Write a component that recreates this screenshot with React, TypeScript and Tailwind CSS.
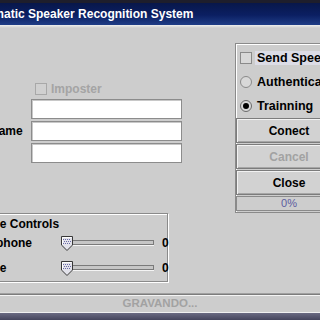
import React from "react";

function Thumb() {
  const dots: React.ReactElement[] = [];
  for (let y = 3; y <= 7; y += 2) {
    for (let x = 2 + ((y - 3) / 2) % 2; x <= 9; x += 2) {
      dots.push(<rect key={`${x}-${y}`} x={x} y={y} width={1} height={1} fill="#6c6ca8" />);
    }
  }
  return (
    <svg width="12" height="15" viewBox="0 0 12 15" className="block">
      <polygon points="0.5,0.5 11.5,0.5 11.5,9 6,14.5 0.5,9" fill="#e2e2ea" stroke="#383838" strokeWidth="1" />
      <polyline points="1.5,8.5 1.5,1.5 10.5,1.5" fill="none" stroke="#ffffff" strokeWidth="1" />
      {dots}
    </svg>
  );
}

function Slider() {
  return (
    <div className="relative w-[93px] h-[20px] shrink-0">
      <div className="absolute left-0 right-0 top-[7px] h-[5px] border border-[#7a7a7a] bg-[#c6c6c6] shadow-[0_1px_0_#f4f4f4]" />
      <div className="absolute left-0 top-[3px]">
        <Thumb />
      </div>
    </div>
  );
}

function Field({ label }: { label: string }) {
  return (
    <div className="flex items-center h-[20px]">
      <span className="w-[68px] shrink-0 whitespace-nowrap leading-[14px] ml-[-3px] mr-[3px]">{label}</span>
      <div className="w-[151px] h-[20px] border border-[#8c8c8c] bg-white shadow-[inset_1px_1px_0_#c8c8c8]" />
    </div>
  );
}

function Button({ label, disabled }: { label: string; disabled?: boolean }) {
  return (
    <div
      className={`w-[106px] h-[25px] flex items-center justify-center border border-[#7c7c7c] bg-[#d2d2d2] shadow-[inset_1px_1px_0_#f2f2f2,inset_-1px_-1px_0_#a6a6a6] ${
        disabled ? "text-[#a2a2a2]" : "text-black"
      }`}
    >
      {label}
    </div>
  );
}

export default function App() {
  return (
    <div className="w-[320px] h-[320px] overflow-hidden bg-[#cdcdcd] flex flex-col font-['Liberation_Sans',Arial,sans-serif] text-[12px] font-bold text-black">
      <div className="h-[3px] shrink-0 bg-[#1e1e2c]" />
      <div className="h-[22px] shrink-0 flex items-center bg-[linear-gradient(to_bottom,#08174a,#0b1f62_55%,#1f3d86)]">
        <span className="ml-[-34px] whitespace-nowrap text-white leading-none">
          Automatic Speaker Recognition System
        </span>
      </div>
      <div className="h-[3px] shrink-0 bg-[linear-gradient(to_bottom,#ededed,#cdcdcd)]" />

      <div className="flex h-[265px] shrink-0">
        {/* left column */}
        <div className="w-[235px] shrink-0 flex flex-col">
          <div className="ml-[-37px] flex flex-col">
            <div className="mt-[54px] h-[13px] flex items-center pl-[72px]">
              <div className="w-[12px] h-[12px] border border-[#a8a8a8] bg-[#d0d0d0]" />
              <span className="ml-[4px] text-[#a4a4a4] leading-none">Imposter</span>
            </div>
            <div className="mt-[4px] flex flex-col gap-[2px]">
              <Field label="Login" />
              <Field label="User Name" />
              <Field label="Pass" />
            </div>
            <div className="mt-[50px] ml-[-8px] w-[213px] border border-[#8a8a8a] shadow-[inset_1px_1px_0_#ffffff,1px_1px_0_#ffffff] pt-[3px] pb-[3px] pl-[8px]">
              <div className="leading-[14px] h-[14px] whitespace-nowrap">Volume Controls</div>
              <div className="mt-[2px] h-[20px] flex items-center">
                <span className="w-[97px] shrink-0 whitespace-nowrap">Microphone</span>
                <Slider />
                <span className="ml-[8px]">0</span>
              </div>
              <div className="mt-[5px] h-[20px] flex items-center">
                <span className="w-[97px] shrink-0 whitespace-nowrap">Volume</span>
                <Slider />
                <span className="ml-[8px]">0</span>
              </div>
            </div>
          </div>
        </div>

        {/* right panel */}
        <div className="flex-1 pt-[15px]">
          <div className="w-[110px] border border-[#8a8a8a] shadow-[inset_1px_1px_0_#ffffff] pt-[2px] pb-[1px] flex flex-col whitespace-nowrap">
            <div className="h-[24px] flex items-center pl-[4px]">
              <div className="w-[12px] h-[12px] border border-[#8a8a8a] bg-[#d8d8d8] shrink-0" />
              <span className="ml-[3px] h-[14px] flex items-center px-[2px] bg-[#dcdce6] w-full text-[12.5px]">Send Speech</span>
            </div>
            <div className="h-[24px] flex items-center pl-[4px]">
              <div className="w-[12px] h-[12px] rounded-full border border-[#8a8a8a] bg-[#d8d8d8] shrink-0" />
              <span className="ml-[5px] text-[12.5px]">Authentication</span>
            </div>
            <div className="h-[24px] flex items-center pl-[4px]">
              <div className="w-[12px] h-[12px] rounded-full border border-[#6a6a6a] bg-[#d8d8d8] shrink-0 flex items-center justify-center">
                <div className="w-[6px] h-[6px] rounded-full bg-black" />
              </div>
              <span className="ml-[5px] text-[12.5px]">Trainning</span>
            </div>
            <div className="flex flex-col gap-[1px]">
              <Button label="Conect" />
              <Button label="Cancel" disabled />
              <Button label="Close" />
            </div>
            <div className="mt-[1px] w-[106px] h-[15px] border border-[#8a8a8a] bg-[#cdcdcd] flex items-center justify-center text-[11px] font-normal text-[#5c5ca0]">
              0%
            </div>
          </div>
        </div>
      </div>

      <div className="h-[1px] shrink-0 bg-[#a0a0a0]" />
      <div className="h-[1px] shrink-0 bg-[#7c7c7c]" />
      <div className="h-[1px] shrink-0 bg-[#f4f4f4]" />
      <div className="h-[16px] shrink-0 flex items-center justify-center">
        <span className="text-[11.5px] text-[#a2a2a2] leading-none">GRAVANDO...</span>
      </div>
      <div className="h-[1px] shrink-0 bg-[#f0f0f0]" />
      <div className="h-[7px] shrink-0 bg-[linear-gradient(to_bottom,#6a6a82,#44445c)]" />
    </div>
  );
}
